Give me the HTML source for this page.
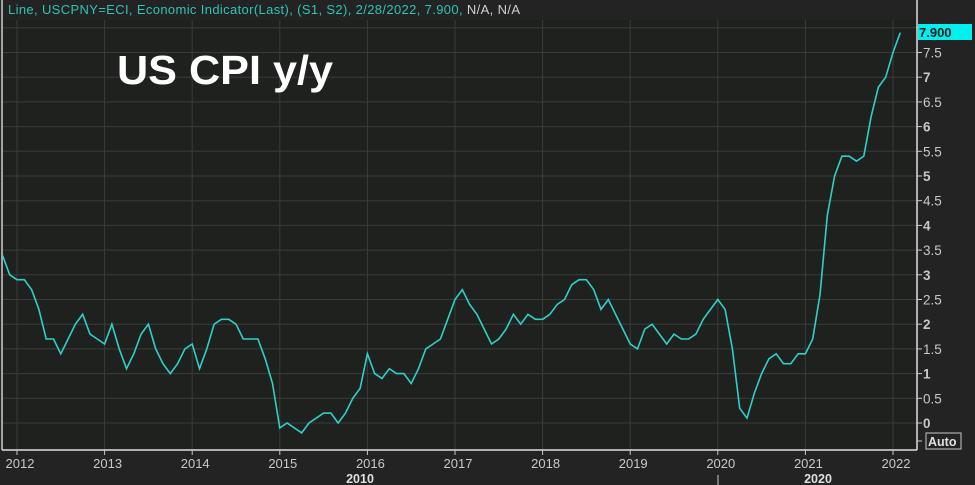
<!DOCTYPE html>
<html><head><meta charset="utf-8"><style>
html,body{margin:0;padding:0;background:#232323;width:975px;height:485px;overflow:hidden}
svg{display:block}
</style></head><body>
<svg id="s" width="975" height="485" xmlns="http://www.w3.org/2000/svg" font-family="Liberation Sans, sans-serif">
<rect width="975" height="485" fill="#232323"/>
<rect x="2" y="20" width="915" height="430" fill="#1f211f"/>
<g id="grid" stroke="#3a3c3a" stroke-width="1"></g>
<line x1="2" y1="0" x2="2" y2="450" stroke="#cfcfcf" stroke-width="1.5"/>
<line x1="917" y1="0" x2="917" y2="450" stroke="#e0e0e0" stroke-width="1.5"/>
<line x1="2" y1="450" x2="917" y2="450" stroke="#e0e0e0" stroke-width="1.5"/>
<g id="ax" fill="#c8c8c8" font-size="13.5"></g>
<g id="yr" fill="#c8c8c8" font-size="13" text-anchor="middle"></g>
<polyline id="ln" fill="none" stroke="#2fd0c8" stroke-width="1.6" points=""/>
<text x="8" y="14" font-size="13" fill="#2ec4b6" textLength="512" lengthAdjust="spacing">Line, USCPNY=ECI, Economic Indicator(Last), (S1, S2),  2/28/2022, 7.900, <tspan fill="#d0d0d0">N/A, N/A</tspan></text>
<text x="117" y="84" font-size="41" font-weight="bold" fill="#ffffff" textLength="216" lengthAdjust="spacingAndGlyphs">US CPI y/y</text>
<rect x="918" y="24" width="54" height="16" fill="#00f0f0"/>
<text x="919" y="37" font-size="13" font-weight="bold" fill="#1a1a1a">7.900</text>
<rect x="926" y="433" width="35" height="16" fill="none" stroke="#c8c8c8"/>
<text x="928" y="446" font-size="12.5" font-weight="bold" fill="#e0e0e0">Auto</text>
<text x="360" y="483" font-size="12.5" font-weight="bold" fill="#e0e0e0" text-anchor="middle">2010</text>
<text x="818" y="483" font-size="12.5" font-weight="bold" fill="#e0e0e0" text-anchor="middle">2020</text>
<line x1="718" y1="475" x2="718" y2="485" stroke="#c8c8c8"/>
</svg>
<script>
var NS="http://www.w3.org/2000/svg";
function Y(v){return 423-49.4*v;}
function X(m){return 17+m*7.3;}
var g=document.getElementById('grid'),ax=document.getElementById('ax'),yr=document.getElementById('yr');
function el(p,t,a,txt){var e=document.createElementNS(NS,t);for(var k in a)e.setAttribute(k,a[k]);if(txt)e.textContent=txt;p.appendChild(e);return e;}
for(var i=0;i<=16;i++){var v=i*0.5,y=Y(v);if(y<20)continue;el(g,'line',{x1:2,x2:917,y1:y,y2:y});
el(ax,'line',{x1:917,x2:922,y1:y,y2:y,stroke:'#c8c8c8'});
if(i<16)el(ax,'text',{x:923,y:y+5,'font-weight':(i%2==0)?'bold':'normal'},String(v));}
el(ax,'line',{x1:917,x2:922,y1:441,y2:441,stroke:'#c8c8c8'});
for(var yv=2012;yv<=2022;yv++){var x=X((yv-2012)*12);el(g,'line',{x1:x,x2:x,y1:20,y2:450});
el(yr,'line',{x1:x,x2:x,y1:450,y2:455,stroke:'#c8c8c8'});el(yr,'text',{x:x+3,y:468},String(yv));}
var d=[3.4,3.0,2.9,2.9,2.7,2.3,1.7,1.7,1.4,1.7,2.0,2.2,1.8,1.7,1.6,2.0,1.5,1.1,1.4,1.8,2.0,1.5,1.2,1.0,1.2,1.5,1.6,1.1,1.5,2.0,2.1,2.1,2.0,1.7,1.7,1.7,1.3,0.8,-0.1,0.0,-0.1,-0.2,0.0,0.1,0.2,0.2,0.0,0.2,0.5,0.7,1.4,1.0,0.9,1.1,1.0,1.0,0.8,1.1,1.5,1.6,1.7,2.1,2.5,2.7,2.4,2.2,1.9,1.6,1.7,1.9,2.2,2.0,2.2,2.1,2.1,2.2,2.4,2.5,2.8,2.9,2.9,2.7,2.3,2.5,2.2,1.9,1.6,1.5,1.9,2.0,1.8,1.6,1.8,1.7,1.7,1.8,2.1,2.3,2.5,2.3,1.5,0.3,0.1,0.6,1.0,1.3,1.4,1.2,1.2,1.4,1.4,1.7,2.6,4.2,5.0,5.4,5.4,5.3,5.4,6.2,6.8,7.0,7.5,7.9];
var pts=d.map(function(v,i){return X(i-2).toFixed(1)+','+Y(v).toFixed(1);}).join(' ');
document.getElementById('ln').setAttribute('points',pts);
</script>
</body></html>
